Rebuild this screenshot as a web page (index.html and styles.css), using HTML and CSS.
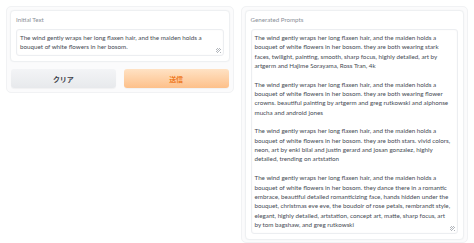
FILE: index.html
```html
<!DOCTYPE html>
<html lang="ja">
<head>
    <meta charset="UTF-8">
    <meta name="viewport" content="width=device-width, initial-scale=1.0">
    <title>Prompt Generator</title>
    <link rel="stylesheet" href="styles.css">
</head>
<body>
    <div class="app">
        <div class="panel">
            <div class="block">
                <label class="block-label" for="initial">Initial Text</label>
                <textarea id="initial" class="box box-small">The wind gently wraps her long flaxen hair, and the maiden holds a bouquet of white flowers in her bosom.</textarea>
            </div>
            <div class="btn-row">
                <button class="btn btn-secondary">クリア</button>
                <button class="btn btn-primary">送信</button>
            </div>
        </div>
        <div class="panel">
            <div class="block">
                <label class="block-label" for="prompts">Generated Prompts</label>
                <textarea id="prompts" class="box box-large" readonly>The wind gently wraps her long flaxen hair, and the maiden holds a bouquet of white flowers in her bosom. they are both wearing stark faces, twilight, painting, smooth, sharp focus, highly detailed, art by artgerm and Hajime Sorayama, Ross Tran, 4k

The wind gently wraps her long flaxen hair, and the maiden holds a bouquet of white flowers in her bosom. they are both wearing flower crowns. beautiful painting by artgerm and greg rutkowski and alphonse mucha and android jones

The wind gently wraps her long flaxen hair, and the maiden holds a bouquet of white flowers in her bosom. they are both stars. vivid colors, neon, art by enki bilal and justin gerard and josan gonzalez, highly detailed, trending on artstation

The wind gently wraps her long flaxen hair, and the maiden holds a bouquet of white flowers in her bosom. they dance there in a romantic embrace, beautiful detailed romanticizing face, hands hidden under the bouquet, christmas eve eve, the boudoir of rose petals, rembrandt style, elegant, highly detailed, artstation, concept art, matte, sharp focus, art by tom bagshaw, and greg rutkowski</textarea>
            </div>
        </div>
    </div>
</body>
</html>
```

FILE: styles.css
```css
body, html {
    margin: 0;
    padding: 0;
    background-color: #ffffff;
    font-family: Lato, "Noto Sans CJK JP", sans-serif;
}

.app {
    display: flex;
    align-items: flex-start;
    gap: 7px;
    padding: 6px;
}

.panel {
    flex: 1;
    display: flex;
    flex-direction: column;
    gap: 6px;
    padding: 3px 3px 2px 3px;
    background-color: #fbfbfc;
    border: 1px solid #f1f2f4;
    border-radius: 5px;
    box-sizing: border-box;
}

.block {
    display: flex;
    flex-direction: column;
    padding: 5px 5px 5px 5px;
    background-color: #ffffff;
    border: 1px solid #eef0f2;
    border-radius: 4px;
    box-shadow: 0 0 2px rgba(0, 0, 0, 0.03);
}

.block-label {
    font-size: 6.2px;
    line-height: 8px;
    color: #8a8f98;
    margin-bottom: 5px;
}

.box {
    display: block;
    width: 100%;
    box-sizing: border-box;
    padding: 3px 4px 3px 3px;
    margin: 0;
    font-family: Lato, sans-serif;
    font-size: 6.25px;
    line-height: 9.35px;
    color: #464b54;
    background-color: #ffffff;
    border: 1px solid #eceef1;
    border-radius: 3px;
    box-shadow: inset 0 0 2px rgba(0, 0, 0, 0.04);
    resize: none;
    overflow: hidden;
    outline: none;
    background-image: repeating-linear-gradient(135deg, transparent 0 1px, #b3b7bd 1px 1.6px);
    background-size: 5px 5px;
    background-position: right 2px bottom 2px;
    background-repeat: no-repeat;
}

.box-small {
    height: 27px;
}

.box-large {
    height: 205px;
}

.btn-row {
    display: flex;
    gap: 8px;
    padding: 1px 1px 2px 1px;
}

.btn {
    flex: 1;
    height: 19px;
    border: none;
    border-radius: 3px;
    font-family: Lato, "Noto Sans CJK JP", sans-serif;
    font-size: 7px;
    font-weight: bold;
    cursor: pointer;
}

.btn-secondary {
    background: linear-gradient(180deg, #f3f4f6, #e7e9ec);
    color: #3b4049;
    box-shadow: 0 1px 1px rgba(0, 0, 0, 0.04);
}

.btn-primary {
    background: linear-gradient(180deg, #ffe2c4, #fdc08a);
    color: #ef7a24;
    box-shadow: 0 1px 1px rgba(0, 0, 0, 0.04);
}
```
